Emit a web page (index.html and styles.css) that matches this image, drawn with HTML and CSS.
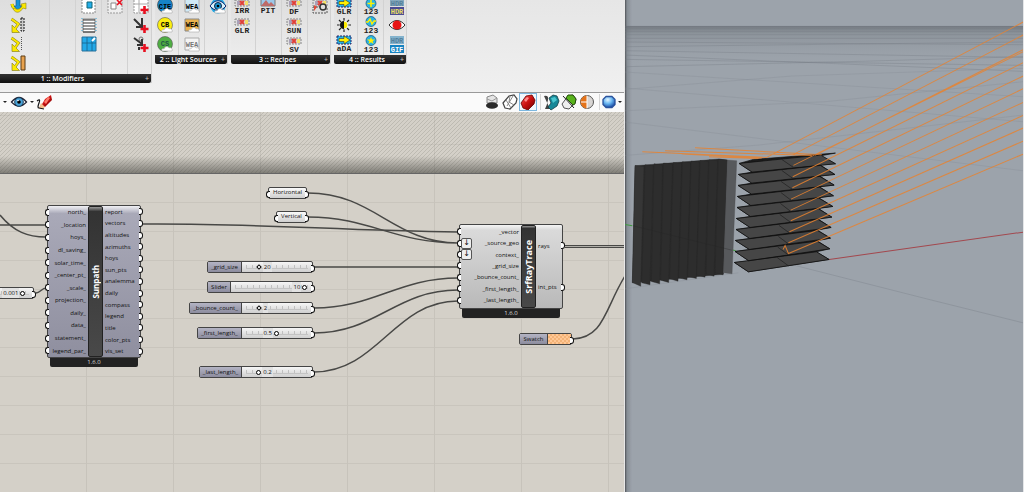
FILE: index.html
```html
<!DOCTYPE html>
<html lang="en">
<head>
<meta charset="utf-8">
<title>Facade ray trace</title>
<link rel="stylesheet" href="styles.css">
</head>
<body>
<svg class="defs" aria-hidden="true">
  <defs>
    <linearGradient id="redg" x1="0" y1="0" x2="1" y2="1"><stop offset="0" stop-color="#f55"/><stop offset=".5" stop-color="#c81010"/><stop offset="1" stop-color="#600"/></linearGradient>
    <radialGradient id="blueg" cx=".4" cy=".3" r=".7"><stop offset="0" stop-color="#e4f5ff"/><stop offset=".5" stop-color="#6bb8f2"/><stop offset="1" stop-color="#1c4fa8"/></radialGradient>
    <symbol id="strip" viewBox="0 0 18 18"><path d="M2 2h14v6H2z" fill="#ddd" stroke="#888" stroke-dasharray="2 1"/><path d="M4 3h3v4H4z" fill="#a9a0b8"/><path d="M7 3l4 4M11 3l-4 4" stroke="#e04038" stroke-width="2"/><path d="M12 3h3v4h-3z" fill="#f3e06a"/></symbol>
    <symbol id="arrow" viewBox="0 0 18 18"><path d="M2.500 3l7 5-4.500 6" fill="none" stroke="#8d8420" stroke-width="2.800"/><path d="M3 9v7.500h7.500z" fill="#fbe900" stroke="#8d8420" stroke-width=".7"/><path d="M2.500 3l7 5-4.500 6" fill="none" stroke="#fbe900" stroke-width="1.800"/></symbol>
    <symbol id="plus" viewBox="0 0 18 18"><path d="M12.500 9v8M8.500 13h8" stroke="#e81020" stroke-width="2.600"/></symbol>
    <symbol id="cloud" viewBox="0 0 18 18"><path d="M6 16c-1-2 1-3 2-2 1-3 4-3 5-1 2-1 4 1 3 3z" fill="#fff" stroke="#aaa" stroke-width=".6"/></symbol>
    <symbol id="disc" viewBox="0 0 18 18"><circle cx="9" cy="5.500" r="5" fill="#29b4e6" stroke="#206080" stroke-width=".8"/></symbol>
    <symbol id="boxarrow" viewBox="0 0 18 18"><path d="M2 1h14v8H2z" fill="#29b4e6" stroke="#226" stroke-dasharray="2 1"/><path d="M4 3.500h5V1l6 4-6 4V6.500H4z" fill="#fff000" stroke="#333" stroke-width=".6"/></symbol>
  </defs>
</svg>
<main class="desk">
  <section class="editor">
    <header class="ribbon">
      <div class="group group-wide">
        <div class="tools tools-mod">
          <div class="col col-first">
            <button aria-label="Project"><svg viewBox="0 0 18 18"><path d="M3 7c1 5 5 7 12 1" fill="none" stroke="#8d8420" stroke-width="3.200"/><path d="M3 7c1 5 5 7 12 1" fill="none" stroke="#fbe900" stroke-width="2.200"/><path d="M7 0h4v9h2l-4 5-4-5h2z" fill="#1692d8" stroke="#15567c" stroke-width=".6"/><path d="M4 12c3 5 7 4 10-1l3 1V6l-5 1 1 2c-2 4-5 4-8 2z" fill="#fbe900" stroke="#8d8420" stroke-width=".6"/></svg></button>
            <button aria-label="Glass"><svg viewBox="0 0 18 18"><use href="#arrow"/><path d="M12 2h3v13h-3z" fill="#ccc" stroke="#111" stroke-dasharray="2 1"/></svg></button>
            <button aria-label="Air wall"><svg viewBox="0 0 18 18"><use href="#arrow"/><path d="M12.500 2v13" stroke="#555" stroke-dasharray="1 1"/></svg></button>
            <button aria-label="Opaque"><svg viewBox="0 0 18 18"><use href="#arrow"/><path d="M12 2h4v14h-4z" fill="#e8a24e" stroke="#5a3d16"/></svg></button>
          </div>
          <div class="col"></div>
          <div class="col">
            <button aria-label="Window"><svg viewBox="0 0 18 18"><path d="M2 0h13v16H2z" fill="#fff" stroke="#888" stroke-dasharray="2 1"/><path d="M7 5h5v6H7z" fill="#24aeea" stroke="#167"/></svg></button>
            <button aria-label="Louvers"><svg viewBox="0 0 18 18"><path d="M3 3h12v13H3z" fill="#fff" stroke="#888"/><path d="M3 4h12M3 7h12M3 10h12M3 13h12M3 16h12" stroke="#333" stroke-width="1.200"/><path d="M2 2v14M16 2v14" stroke="#3aa0d0" stroke-dasharray="1 2"/></svg></button>
            <button aria-label="Apertures"><svg viewBox="0 0 18 18"><path d="M2 2h14v14H2z" fill="#23a9e8" stroke="#28709a"/><path d="M7 2v14M12 2v14M2 8h14" stroke="#176089" stroke-width=".8"/><path d="M12 6l3-3" stroke="#fff" stroke-width="2"/></svg></button>
          </div>
          <div class="col"><button aria-label="Remove"><svg viewBox="0 0 18 18"><path d="M2 1h14v15H2z" fill="#eee" stroke="#999" stroke-dasharray="2 1"/><path d="M5 6h5v6H5z" fill="#fff" stroke="#888"/><path d="M11 3l5 5M16 3l-5 5" stroke="#e81020" stroke-width="1.600"/></svg></button></div>
          <div class="col">
            <button aria-label="Add window"><svg viewBox="0 0 18 18"><path d="M2 1h14v15H2z" fill="#fff" stroke="#999" stroke-dasharray="2 1"/><path d="M7 1v15M2 7h14" stroke="#aaa"/><use href="#plus"/></svg></button>
            <button aria-label="Add shade"><svg viewBox="0 0 18 18"><path d="M2 3l7 7M10 2v9H4" fill="none" stroke="#333" stroke-width="2"/><use href="#plus"/></svg></button>
            <button aria-label="Add object"><svg viewBox="0 0 18 18"><circle cx="9" cy="4" r="2" fill="#ddd" stroke="#777"/><path d="M2 3l8 6M10 4v6H5M7 12v3" fill="none" stroke="#333" stroke-width="2"/><use href="#plus"/></svg></button>
          </div>
        </div>
        <h2>1 :: Modifiers<i>+</i></h2>
      </div>
      <div class="group group-3">
        <div class="tools">
          <div class="col">
            <button aria-label="CIE sky"><svg viewBox="0 0 18 18"><circle cx="9" cy="8" r="7.500" fill="#1583c8" stroke="#333" stroke-width=".6"/><text x="9" y="12">CIE</text><use href="#cloud"/></svg></button>
            <button aria-label="CB sky"><svg viewBox="0 0 18 18"><circle cx="9" cy="9" r="7.500" fill="#fbee10" stroke="#555" stroke-width=".6"/><text x="9" y="11">CB</text><use href="#cloud"/></svg></button>
            <button aria-label="CS sky"><svg viewBox="0 0 18 18"><circle cx="9" cy="9" r="7.500" fill="#4fae42" stroke="#555" stroke-width=".6"/><text x="9" y="11" fill="#254">CS</text><use href="#cloud"/></svg></button>
          </div>
          <div class="col">
            <button aria-label="Weather"><svg viewBox="0 0 18 18"><path d="M2 2h14v13H2z" fill="#cfe9f6" stroke="#aaa"/><text x="9" y="12">WEA</text><use href="#cloud"/></svg></button>
            <button aria-label="Weather sun"><svg viewBox="0 0 18 18"><path d="M2 3h14v12H2z" fill="#eab24c" stroke="#888"/><text x="9" y="11">WEA</text><use href="#cloud"/></svg></button>
            <button aria-label="Weather file"><svg viewBox="0 0 18 18"><path d="M2 3h14v12H2z" fill="#f4f4f4" stroke="#aaa"/><text x="9" y="12" fill="#777">WEA</text><use href="#cloud"/></svg></button>
          </div>
          <div class="col"><button aria-label="View sky"><svg viewBox="0 0 18 18"><circle cx="9" cy="9" r="7.500" fill="#21a8e3"/><path d="M1 9c5-7 11-7 16 0-5 6-11 6-16 0z" fill="#d8f1fb" stroke="#126"/><circle cx="9" cy="9" r="3.500" fill="#1596d4" stroke="#124"/><circle cx="9" cy="9" r="1.300"/><use href="#cloud"/></svg></button></div>
        </div>
        <h2>2 :: Light Sources<i>+</i></h2>
      </div>
      <div class="group group-4">
        <div class="tools">
          <div class="col">
            <button aria-label="IRR"><svg viewBox="0 0 18 18"><use href="#strip" y="1"/><text class="code" x="9" y="16">IRR</text></svg></button>
            <button aria-label="GLR"><svg viewBox="0 0 18 18"><use href="#strip" y="1"/><text class="code" x="9" y="17">GLR</text></svg></button>
          </div>
          <div class="col"><button aria-label="PIT"><svg viewBox="0 0 18 18"><path d="M2 1h14v8H2z" fill="#9cc8e8" stroke="#777"/><path d="M2 9l5-6 3 4 2-2 4 4z" fill="#bd6b68"/><text class="code" x="9" y="16">PIT</text></svg></button></div>
          <div class="col">
            <button aria-label="DF"><svg viewBox="0 0 18 18"><use href="#strip" y="1"/><text class="code" x="9" y="17">DF</text></svg></button>
            <button aria-label="SUN"><svg viewBox="0 0 18 18"><use href="#strip" y="1"/><text class="code" x="9" y="17">SUN</text></svg></button>
            <button aria-label="SV"><svg viewBox="0 0 18 18"><use href="#strip" y="1"/><text class="code" x="9" y="17">SV</text></svg></button>
          </div>
          <div class="col"><button aria-label="Custom recipe"><svg viewBox="0 0 18 18"><use href="#strip" y="1"/><path d="M2 10h14v6H2z" fill="#ddd" stroke="#555" stroke-dasharray="2 1"/><path d="M3 8l3 2-3 4z" fill="#e04838"/><circle cx="12" cy="10" r="3" fill="#ddd" stroke="#333" stroke-width="1.400"/></svg></button></div>
        </div>
        <h2>3 :: Recipes<i>+</i></h2>
      </div>
      <div class="group group-3">
        <div class="tools">
          <div class="col">
            <button aria-label="GLR result"><svg viewBox="0 0 18 18"><use href="#boxarrow" y="1"/><text class="code" x="9" y="17">GLR</text></svg></button>
            <button aria-label="Daylight"><svg viewBox="0 0 18 18"><path d="M9 2v14M2 9h14M4 4l10 10M14 4L4 14" stroke="#222" stroke-width="1.200"/><circle cx="9" cy="9" r="4" fill="#fbe900" stroke="#eee"/><path d="M9 5a4 4 0 0 0 0 8z" fill="#111"/></svg></button>
            <button aria-label="sDA"><svg viewBox="0 0 18 18"><use href="#boxarrow"/><text class="code" x="9" y="16">aDA</text></svg></button>
          </div>
          <div class="col">
            <button aria-label="Add results"><svg viewBox="0 0 18 18"><use href="#disc" y="1"/><path d="M9 3v7M5.500 6.500h7" stroke="#fff000" stroke-width="1.600"/><text class="code" x="9" y="17">123</text></svg></button>
            <button aria-label="Results graph"><svg viewBox="0 0 18 18"><use href="#disc"/><path d="M4 6h2l2-3 2 5 2-3h2" fill="none" stroke="#fff000" stroke-width="1.400"/><text class="code" x="9" y="17">123</text></svg></button>
            <button aria-label="Results star"><svg viewBox="0 0 18 18"><use href="#disc"/><path d="M9 2l1 2.500h3l-2.400 1.700 1 2.800L9 7.300 6.400 9l1-2.800L5 4.500h3z" fill="#fff000"/><text class="code" x="9" y="17">123</text></svg></button>
          </div>
          <div class="col">
            <button aria-label="HDR"><svg viewBox="0 0 18 18"><path d="M2 1h14v8H2z" fill="#84a9bd"/><path d="M2 10h14v8H2z" fill="#4b4c92"/><text x="9" y="9" fill="#56829b">HDR</text><text x="9" y="16.500" fill="#e8df65">HDR</text></svg></button>
            <button aria-label="View"><svg viewBox="0 0 18 18"><path d="M1 9c5-6 11-6 16 0-5 6-11 6-16 0z" fill="#fff" stroke="#333"/><circle cx="9" cy="9" r="4.500" fill="#e81414"/></svg></button>
            <button aria-label="HDR to GIF"><svg viewBox="0 0 18 18"><path d="M2 1h14v8H2z" fill="#84b3cd"/><path d="M2 10h14v8H2z" fill="#1683c2"/><text x="9" y="7.500" fill="#527f9b">HDR</text><text x="9" y="16.500" fill="#fff">GIF</text></svg></button>
          </div>
        </div>
        <h2>4 :: Results<i>+</i></h2>
      </div>
    </header>

    <nav class="toolbar">
      <div class="bar">
        <span class="caret"></span>
        <button aria-label="Preview"><svg viewBox="0 0 18 18"><path d="M1.500 9Q9 0 16.500 9 9 17 1.500 9z" fill="#fff" stroke="#223" stroke-width="1.300"/><circle cx="9" cy="9" r="4.300" fill="#4aa3d8" stroke="#17405f"/><circle cx="9" cy="9" r="1.800"/><circle cx="8" cy="7.500" r=".8" fill="#fff"/></svg></button>
        <span class="caret"></span>
        <button aria-label="Sketch"><svg viewBox="0 0 18 18"><path d="M5 13l4-7 6-4 1 5-7 7z" fill="url(#redg)"/><path d="M8 9l4-5 2 1-4 6z" fill="#ff7a6a"/><path d="M3 15l2-5 4 4-3 2z" fill="#f4bf8c"/><path d="M1 8q4-3 2 2t0 5l5 1" fill="none" stroke="#111" stroke-width="1.200"/></svg></button>
      </div>
      <div class="bar bar-end">
        <button aria-label="No preview"><svg viewBox="0 0 18 18"><path d="M4 4l6-2 4 3v5H4z" fill="#e4e4e4" stroke="#888"/><path d="M4 6l5 2 5-3" fill="none" stroke="#999"/><ellipse cx="9" cy="12.500" rx="6" ry="3.200" fill="#2a2a2a"/></svg></button>
        <button aria-label="Wireframe"><svg viewBox="0 0 18 18"><path d="M2 10l6-7 5-1 3 4-1 4-6 6-5-1z" fill="#fff" stroke="#444" stroke-width="1.200"/><path d="M5 7l5 8M9 3l-1 6 5 3M12 3l-6 10" fill="none" stroke="#888"/></svg></button>
        <button class="on" aria-label="Shaded"><svg viewBox="0 0 18 18"><path d="M2 10l5-7 6-1 3 5-1 4-6 6-5-2z" fill="url(#redg)" stroke="#600" stroke-width=".8"/><path d="M5 7l3-3 2 1-3 4z" fill="#ff8b8b"/></svg></button>
        <span class="rule"></span>
        <button aria-label="Selected only"><svg viewBox="0 0 18 18"><path d="M2 3q5-1 4 4t-3 9h5z" fill="#444"/><path d="M7 5l4-3 4 1 2 5-2 5-6 4-3-3 3-4z" fill="#168797" stroke="#143d44" stroke-width=".8"/><path d="M9 5l4-1 2 3-4 3z" fill="#4bc6cf"/></svg></button>
        <button aria-label="Document preview"><svg viewBox="0 0 18 18"><path d="M2 11l6-8 5-1 3 4-1 4-6 6-5-1z" fill="#eee" stroke="#555"/><path d="M6 5l2-3 5 0 3 4-1 5-2 1z" fill="#59b31d" stroke="#264e0c"/><path d="M3 3l11 12" stroke="#222"/></svg></button>
        <button aria-label="Mesh quality"><svg viewBox="0 0 18 18"><circle cx="9" cy="9" r="6.500" fill="#d8d5d3" stroke="#555"/><path d="M9 2.500a6.500 6.500 0 0 0 0 13z" fill="#e4731a"/><path d="M9 2.500v13M3 9h6" stroke="#fff"/></svg></button>
        <span class="rule"></span>
        <button aria-label="Material"><svg viewBox="0 0 18 18"><path d="M6 3.500h6l3 3v5l-3 3H6l-3-3v-5z" fill="url(#blueg)" stroke="#2a529c" stroke-width="1.300" stroke-linejoin="round"/></svg></button>
        <span class="caret"></span>
      </div>
    </nav>

    <div class="canvas">
      <div class="shelf"></div>
      <svg class="wires" aria-hidden="true"><g transform="translate(0 -112)">
        <path d="M0 225H46M0 215C14 232 28 237 46 237M36 293C40 293 42 288 46 288"/>
        <path d="M143 224C260 223 340 231 458 232"/>
        <path d="M308 193C374 193 394 243 458 243M308 217C370 217 394 243 458 243"/>
        <path d="M314 267H458M314 308C374 308 398 278 458 278M314 333C376 333 396 290 458 290M314 372C378 372 394 301 458 301"/>
        <path d="M573 339C604 338 605 308 625 276"/>
        <path class="tree" d="M565 246.500H625"/><path class="tree-core" d="M565 246.500H625"/>
      </g></svg>

      <article class="node sunpath">
        <div class="face">
          <ul class="in"><li>north_</li><li>_location</li><li>hoys_</li><li>dl_saving_</li><li>solar_time_</li><li>_center_pt_</li><li>_scale_</li><li>projection_</li><li>daily_</li><li>data_</li><li>statement_</li><li>legend_par_</li></ul>
          <h3><span>Sunpath</span></h3>
          <ul class="out"><li>report</li><li>vectors</li><li>altitudes</li><li>azimuths</li><li>hoys</li><li>sun_pts</li><li>analemma</li><li>daily</li><li>compass</li><li>legend</li><li>title</li><li>color_pts</li><li>vis_set</li></ul>
        </div>
        <footer>1.6.0</footer>
      </article>

      <article class="node raytrace">
        <div class="face">
          <ul class="in"><li>_vector</li><li class="graft">_source_geo</li><li class="graft">context_</li><li>_grid_size</li><li>_bounce_count_</li><li>_first_length_</li><li>_last_length_</li></ul>
          <h3><span>SrfRayTrace</span></h3>
          <ul class="out"><li>rays</li><li>int_pts</li></ul>
        </div>
        <footer>1.6.0</footer>
      </article>

      <div class="param horizontal">Horizontal</div>
      <div class="param vertical">Vertical</div>

      <label class="slider scale"><span class="track before" style="--at:94"><input type="range" value="94" aria-label="Scale"><output>0.001</output></span></label>
      <label class="slider grid-size"><span class="name">_grid_size</span><span class="track whole" style="--at:19"><input type="range" value="19"><output>20</output></span></label>
      <label class="slider plain"><span class="name">Slider</span><span class="track before" style="--at:99"><input type="range" value="99"><output>10</output></span></label>
      <label class="slider bounce"><span class="name">_bounce_count_</span><span class="track whole" style="--at:19"><input type="range" value="19"><output>2</output></span></label>
      <label class="slider first"><span class="name">_first_length_</span><span class="track before" style="--at:49"><input type="range" value="49"><output>0.5</output></span></label>
      <label class="slider last"><span class="name">_last_length_</span><span class="track" style="--at:18"><input type="range" value="18"><output>0.2</output></span></label>

      <div class="slider swatch"><span class="name">Swatch</span><span class="colour"></span></div>
    </div>
  </section>

  <section class="viewport" aria-label="Perspective view">
    <svg viewBox="0 0 1194 1476" preserveAspectRatio="xMinYMin slice" aria-hidden="true">
      <defs>
        <linearGradient id="haze" x1="0" y1="0" x2="0" y2="1"><stop offset="0" stop-color="#5d6268" stop-opacity=".62"/><stop offset=".2" stop-color="#737980" stop-opacity=".35"/><stop offset="1" stop-color="#9ca3ab" stop-opacity="0"/></linearGradient>
      </defs>
      <path d="M0 78H1194V200H0z" fill="url(#haze)"/>
      <g class="ground">
        <path d="M0 79H1194M0 86H1194M0 95H1194M0 104H1194M0 115H1194M0 126L1194 134M0 140L1194 126M0 152L1194 172M0 165L1194 214M0 200L700 184L1194 170M0 178L1194 196"/>
        <path class="faint" d="M0 216L1194 290M0 268L500 228L1194 205M0 264L1194 365M0 332L600 305L1194 245M0 366L1194 512M0 466L400 435L1194 345M0 866L340 818"/>
        <path d="M510 796L920 900L1194 968"/>
      </g>
      <path d="M612 778L1194 696" stroke="#a3484e" stroke-width="3"/>
      <path d="M0 673L22 677M320 749L332 752" stroke="#3f9b3f" stroke-width="3"/>
      <g class="fins">
        <path class="mass" d="M30 497L280 477L307 480L295 822L22 848z"/>
        <path class="near" d="M30 496L57 499L47 858L22 847z"/><path d="M60 494L85 497L75 854L50 848z"/><path d="M87 491L113 495L104 851L79 844z"/><path d="M115 489L143 492L131 847L107 840z"/><path d="M145 487L170 490L159 843L134 836z"/><path d="M172 485L197 488L186 839L161 833z"/><path d="M198 483L223 486L214 835L188 829z"/><path d="M225 481L250 484L240 831L215 825z"/><path d="M252 479L278 482L267 828L243 821z"/><path d="M280 477L307 480L294 824L270 818z"/>
        <path class="end" d="M307 480L335 482L321 821L295 818z"/>
        <path d="M24 677L320 750" fill="none" stroke="#1b1b1b"/>
      </g>
      <g class="slats">
        <path class="edge" d="M631 459L385 478L342 490L381 516L340 523L380 549L339 556L379 582L337 589L377 616L336 622L376 649L334 655L375 682L333 688L374 715L331 721L373 748L330 754L371 782L328 787L370 815L612 778L574 755L614 746L576 722L616 714L577 690L618 682L579 657L620 651L580 625L623 619L581 593L625 587L583 560L627 555L584 528L629 523L586 495L631 491L587 467z"/>
        <path d="M342 490L587 465L631 491L381 516zM340 523L586 496L629 523L380 549zM339 556L584 529L627 555L379 582zM337 589L583 561L625 587L377 616zM336 622L581 594L623 619L376 649zM334 655L580 626L620 651L375 682zM333 688L579 658L618 682L374 715zM331 721L577 691L616 714L373 748zM330 754L576 723L614 746L371 782zM328 787L574 755L612 778L370 815z"/>
        <path class="seam" d="M470 478L505 502M470 511L503 535M468 544L502 568M467 577L500 602M466 610L498 635M464 643L497 667M462 676L495 700M460 709L492 733M458 741L491 765M456 772L490 797"/>
      </g>
      <path class="rays" d="M425 472L1194 66M500 466L1194 105M570 466L1194 149M505 496L1194 155M503 530L1194 188M502 563L1194 228M498 597L1194 266M497 630L1194 307M497 662L1194 346M493 695L1194 384M490 728L1194 423M474 748L480 736L490 760L1194 462M52 455L425 472M120 452L560 466M210 443L590 464M170 462L410 474M252 470L400 475"/>
    </svg>
  </section>
</main>
</body>
</html>
```
FILE: styles.css
```css
* { box-sizing: border-box; }
body { margin: 0; font-family: "Open Sans", "Noto Sans", sans-serif; font-size: 6px; color: #111; }
.defs { position: absolute; width: 0; height: 0; }
.desk { display: flex; height: 100vh; overflow: hidden; }
.editor { flex: 625 1 0; min-width: 0; display: flex; flex-direction: column; border-right: 1px solid #e8e8e8; overflow: hidden; }
button { border: 0; padding: 0; background: none; display: block; flex: none; width: 18px; height: 18px; }
button svg { display: block; width: 18px; height: 18px; overflow: visible; }
ul, h2, h3 { margin: 0; padding: 0; list-style: none; }

.ribbon { display: flex; align-items: flex-start; gap: 3px; height: 93px; flex: none; background: linear-gradient(#e6e6e6, #f0f0f0); border-bottom: 1px solid #999; overflow: hidden; }
.group { flex: none; border-right: 1px solid #d0d0d0; }
.group-wide { width: 178px; margin-left: -26px; }
.group-3 { width: 73px; }
.group-4 { width: 100px; }
.tools { display: flex; justify-content: center; height: 55px; overflow: hidden; background: linear-gradient(#dedede, #ececec); }
.tools-mod { justify-content: flex-start; height: 74px; padding-left: 26px; }
.col { flex: none; width: 26px; margin-top: -3px; display: flex; flex-direction: column; align-items: center; gap: 1px; }
.col + .col { border-left: 1px solid #d2d2d2; }
.col-first { width: 49px; align-items: flex-start; padding-left: 9px; }
.group h2 { display: flex; align-items: center; justify-content: center; position: relative; height: 9px; padding-right: 6px; border-radius: 0 0 2px 2px; background: linear-gradient(#333, #111); color: #fff; font: 600 7px/9px "Open Sans", sans-serif; white-space: nowrap; }
.group-wide h2 { padding-right: 0; }
.group h2 i { position: absolute; right: 2px; font-style: normal; color: #bbb; }
.ribbon text { font: bold 7px "Liberation Mono", monospace; text-anchor: middle; }
.ribbon text.code { font-size: 8px; fill: #222; }

.toolbar { display: flex; justify-content: space-between; align-items: flex-start; flex: none; height: 19px; background: #fafafa; }
.bar { display: flex; align-items: center; padding-left: 3px; }
.bar .caret { margin: 0 3px 0 0; }
.bar button + .caret { margin: 0 2px 0 2px; }
.bar-end button + .caret { margin: 0 2px 0 0; }
.caret { width: 3px; border: solid transparent; border-width: 2px 2px 0; border-top-color: #222; }
.on { outline: 1px solid #7db8e0; outline-offset: -1px; background: #f1f8fd; }
.rule { width: 1px; height: 16px; margin: 0 1px 0 3px; background: #d6d6d6; }
.rule + button:nth-last-child(2) { margin-left: -1px; }

.canvas { position: relative; flex: 1; overflow: hidden; background-color: #d4d0c8; background-image: linear-gradient(90deg, #c7c3bb 1px, transparent 1px), linear-gradient(#c9c5bd 1px, transparent 1px); background-size: 87px 29px; background-position: 86px 3px; }
.shelf { height: 62px; border-bottom: 1px solid #666; background: linear-gradient(transparent 72%, rgba(60, 60, 55, .55)), linear-gradient(135deg, rgba(120, 120, 110, .25) 12%, transparent 12% 38%, rgba(120, 120, 110, .25) 38% 62%, transparent 62% 88%, rgba(120, 120, 110, .25) 88%) 0 0 / 4px 4px; }
.wires { position: absolute; inset: 0; width: 100%; height: 100%; overflow: visible; }
.wires path { fill: none; stroke: #484846; stroke-width: 1.5; }
.wires .tree { stroke-width: 3; }
.wires .tree-core { stroke: #b0aea8; stroke-width: 1; }

.node, .param, .slider { position: absolute; }
.face { display: flex; border: 1px solid #444; border-radius: 2px; background: linear-gradient(#f4f4f4, #dadada 6%, #b9b9b9); }
.node ul { display: flex; flex-direction: column; min-width: 0; }
.node li { position: relative; flex: 1; display: flex; align-items: center; line-height: 8px; white-space: nowrap; }
.in li { justify-content: flex-end; }
.in { flex: 1; padding-right: 2px; }
.out { padding-left: 2px; }
.node li::before { content: ""; position: absolute; width: 3px; height: 5px; border: 1px solid #111; background: #fff; }
.in li::before { left: -3px; border-right: 0; border-radius: 3px 0 0 3px; }
.out li::before { right: -3px; border-left: 0; border-radius: 0 3px 3px 0; }
.node h3 { width: 15px; flex: none; display: flex; align-items: center; justify-content: center; border: 1px solid #222; border-radius: 2px; background: linear-gradient(#999 0, #333 3%, #494949); color: #fff; font: 700 8px/12px "Open Sans", sans-serif; }
.raytrace h3 { font-size: 9px; }
.node h3 span { writing-mode: vertical-rl; transform: rotate(180deg); }
.node footer { height: 9px; margin: 0 3px; border-radius: 0 0 2px 2px; background: #222; color: #ddd; line-height: 8px; text-align: center; }
.sunpath { left: 47px; top: 93px; width: 94px; }
.sunpath .face { height: 153px; background: linear-gradient(#f0f0f4, #a9a9b8 5%, #8f8f9f); }
.sunpath .in { flex: none; width: 40px; }
.sunpath .out { flex: 1; }
.raytrace { left: 459px; top: 112px; width: 104px; }
.raytrace .face { height: 85px; }
.raytrace .in { padding-top: 1px; padding-bottom: 2px; }
.raytrace .out { width: 26px; }
.graft::after { content: "↓"; position: absolute; left: 1px; width: 9px; height: 9px; border: 1px solid #555; border-radius: 2px; background: #eee; font: 8px/7px "DejaVu Sans", sans-serif; text-align: center; }

.param { height: 12px; border: 1px solid #444; border-radius: 2px; background: linear-gradient(#fafafa, #cfcfcf); line-height: 9px; text-align: center; }
.param::before, .param::after, .slider::after { content: ""; position: absolute; top: 3px; width: 3px; height: 5px; border: 1px solid #111; background: #fff; }
.param::before { left: -3px; border-right: 0; border-radius: 3px 0 0 3px; }
.param::after, .slider::after { right: -3px; border-left: 0; border-radius: 0 3px 3px 0; }
.horizontal { left: 268px; top: 75px; width: 39px; }
.vertical { left: 276px; top: 99px; width: 31px; }

.slider { display: flex; height: 12px; border: 1px solid #444; border-radius: 2px; background: linear-gradient(#f6f6f6, #cfcfcf); line-height: 10px; }
.name { flex: 1; border-right: 1px solid #444; background: linear-gradient(#b4b4c4, #8c8c9e); text-align: center; white-space: nowrap; }
.track { position: relative; flex: none; width: 70px; padding: 0 4px; background: repeating-linear-gradient(90deg, #c0c0c0 0 1px, transparent 1px 6px) 4px 3px / calc(100% - 8px) 3px no-repeat, linear-gradient(#c4c4c4, #c4c4c4) 4px 6px / calc(100% - 8px) 1px no-repeat; }
.track input { appearance: none; display: block; width: 100%; height: 10px; margin: 0; background: none; }
.track input::-webkit-slider-thumb { appearance: none; width: 5px; height: 5px; border: 1px solid #000; border-radius: 50%; background: #fff; }
.whole input::-webkit-slider-thumb { width: 4px; height: 4px; border-radius: 0; transform: rotate(45deg); }
.track output { position: absolute; top: 0; left: calc(10px + (100% - 13px) * var(--at) / 100); padding: 0 1px; background: #e2e2e2; line-height: 10px; }
.track.before output { left: auto; right: calc(10px + (100% - 13px) * (100 - var(--at)) / 100); }
.scale { left: -40px; top: 175px; width: 74px; }
.scale .track { width: 72px; }
.grid-size { left: 207px; top: 149px; width: 106px; }
.plain { left: 207px; top: 169px; width: 106px; }
.plain .track { width: 81px; }
.bounce { left: 189px; top: 190px; width: 124px; }
.first { left: 197px; top: 215px; width: 116px; }
.last { left: 199px; top: 254px; width: 114px; }
.swatch { left: 519px; top: 221px; width: 53px; height: 12px; }
.colour { width: 23px; background: repeating-conic-gradient(#f3b377 0 25%, #ffc795 0 50%) 0 0 / 4px 4px; }

.viewport { flex: 399 1 0; min-width: 0; border-right: 1px solid #e4e6e8; background: linear-gradient(90deg, #505358, #878e95 2px, transparent 7px), #9ca3ab; }
.viewport svg { display: block; width: 100%; height: 100%; }
.ground path { fill: none; stroke: #747a82; stroke-width: 1; }
.ground .faint { stroke: #858c94; }
.fins path { fill: #2d2d2d; stroke: #232323; stroke-width: 1; }
.fins .near { fill: #363636; }
.fins .end { fill: #57595c; stroke: #4b4d50; }
.slats path { fill: #464646; stroke: #0c0c0c; stroke-width: 2; }
.slats .edge { fill: #1c1c1c; }
.slats .seam { fill: none; stroke: #1c1c1c; stroke-width: 2; }
.rays { fill: none; stroke: #e8822f; stroke-width: 3; stroke-opacity: .85; }
```
